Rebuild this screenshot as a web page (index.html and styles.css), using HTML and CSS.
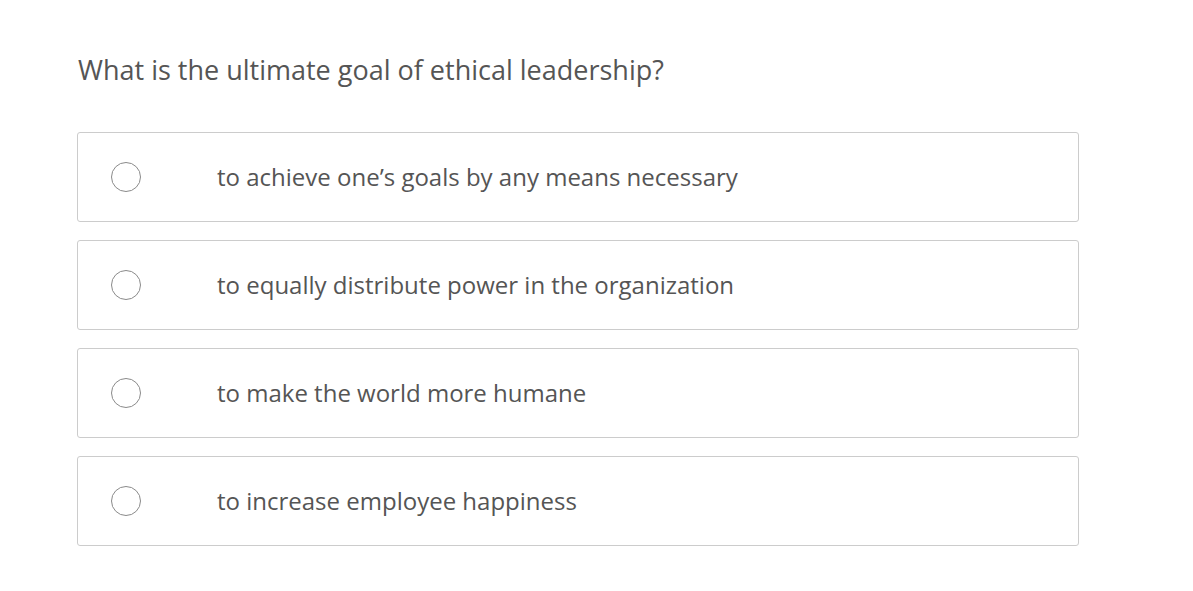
FILE: index.html
```html
<!DOCTYPE html>
<html lang="en">
<head>
<meta charset="utf-8">
<title>Quiz</title>
<link rel="stylesheet" href="styles.css">
</head>
<body>
<main class="quiz">
  <h1 class="question">What is the ultimate goal of ethical leadership?</h1>
  <ul class="options">
    <li class="option"><span class="radio"></span><span class="label">to achieve one’s goals by any means necessary</span></li>
    <li class="option"><span class="radio"></span><span class="label">to equally distribute power in the organization</span></li>
    <li class="option"><span class="radio"></span><span class="label">to make the world more humane</span></li>
    <li class="option"><span class="radio"></span><span class="label">to increase employee happiness</span></li>
  </ul>
</main>
</body>
</html>
```

FILE: styles.css
```css
html, body {
  margin: 0;
  padding: 0;
  background: #fff;
}
body {
  font-family: "Open Sans", "Liberation Sans", sans-serif;
  color: #555;
}
.quiz {
  padding: 50px 0 0 77px;
  width: 1002px;
}
.question {
  margin: 0 0 0 1px;
  font-size: 27px;
  font-weight: 400;
  line-height: 40px;
  color: #555;
}
.options {
  list-style: none;
  margin: 42px 0 0 0;
  padding: 0;
  display: flex;
  flex-direction: column;
  gap: 18px;
}
.option {
  display: flex;
  align-items: center;
  height: 88px;
  border: 1px solid #ccc;
  border-radius: 3px;
  box-sizing: content-box;
}
.radio {
  flex: none;
  width: 28px;
  height: 28px;
  border: 1px solid #8a8a8a;
  border-radius: 50%;
  margin-left: 33px;
  margin-right: 76px;
}
.label {
  font-size: 24px;
  line-height: 30px;
  color: #555;
}
```
